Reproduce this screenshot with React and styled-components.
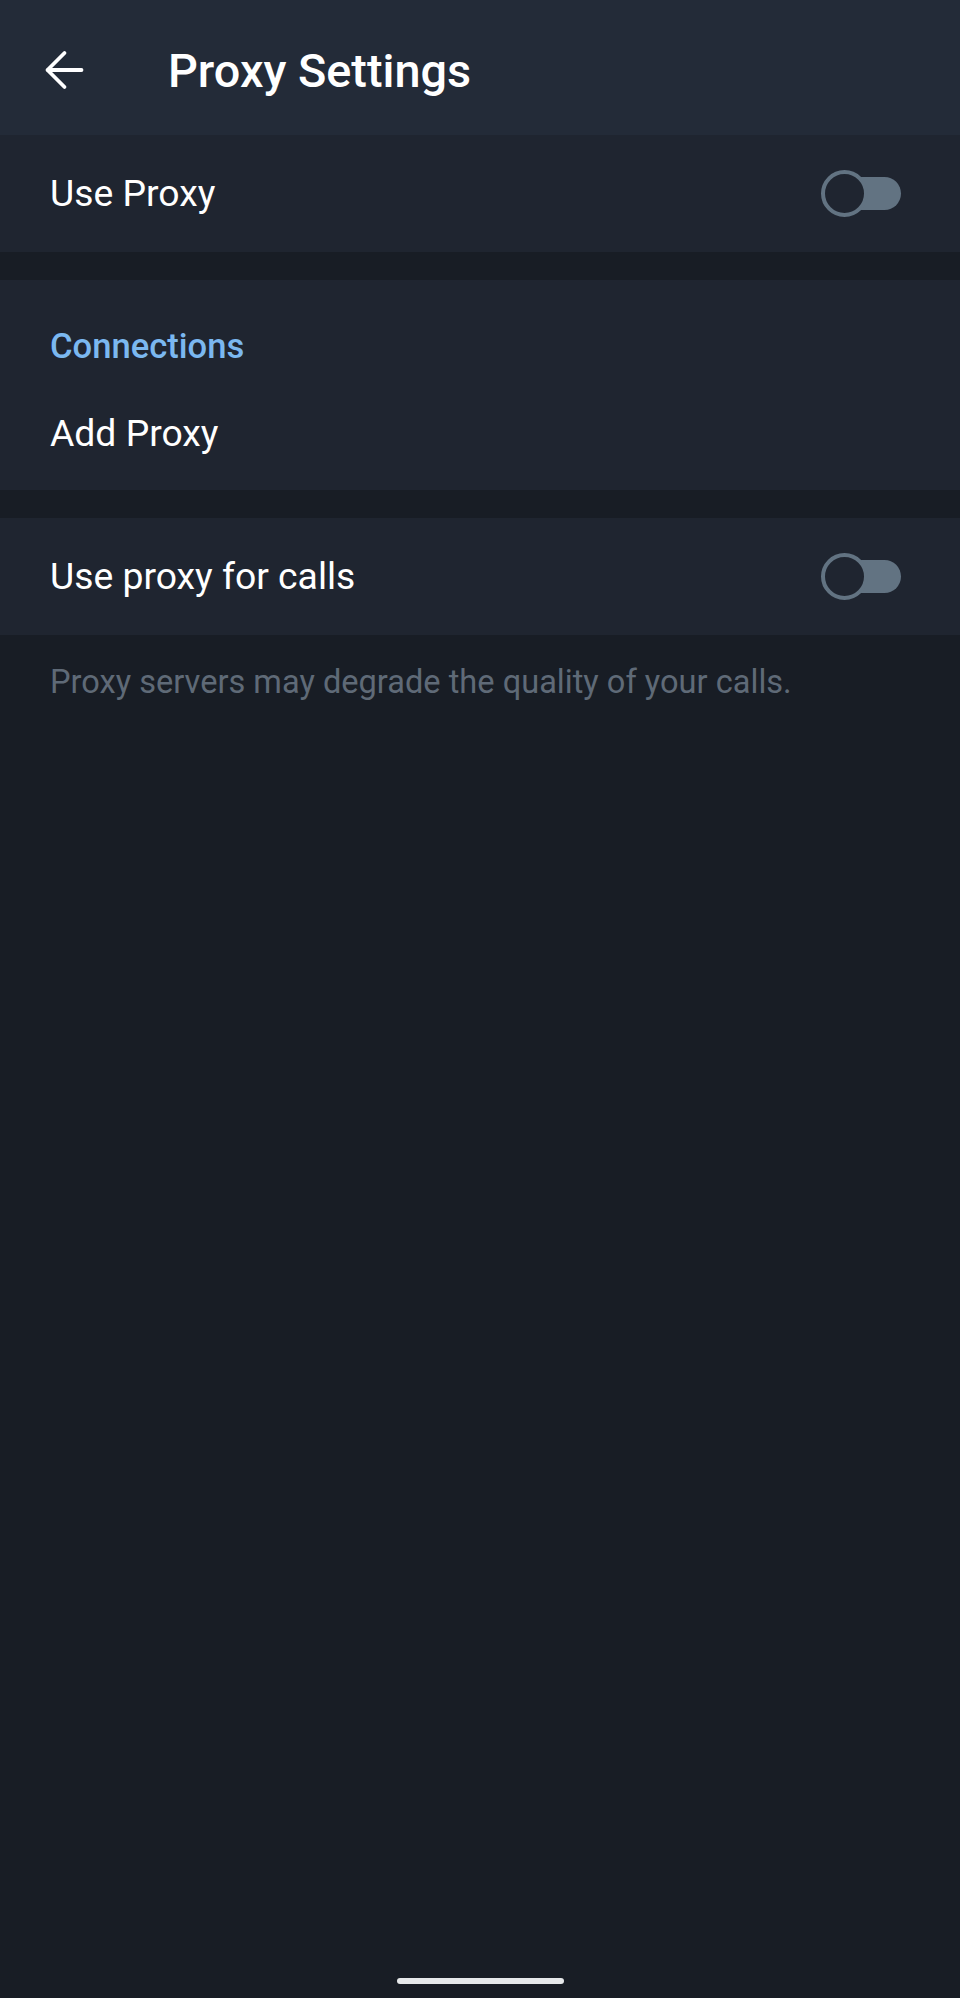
import React from "react";
import styled, { createGlobalStyle } from "styled-components";

const Global = createGlobalStyle`
  html, body { margin: 0; padding: 0; background: #181d25; }
  body { font-family: Roboto, "Noto Sans", "Liberation Sans", sans-serif; -webkit-font-smoothing: antialiased; }
  * { box-sizing: border-box; }
`;

const Screen = styled.div`
  width: 960px;
  min-height: 1998px;
  background: #181d25;
  display: flex;
  flex-direction: column;
`;

const Header = styled.header`
  height: 135px;
  background: #232b38;
  display: flex;
  align-items: center;
  padding: 5px 0 0 44px;
`;

const BackButton = styled.button`
  width: 42px;
  height: 42px;
  padding: 0;
  border: 0;
  background: transparent;
  display: flex;
  align-items: center;
  justify-content: center;
  margin-right: 82px;
  cursor: pointer;
`;

const Title = styled.h1`
  margin: 0;
  padding-top: 2px;
  color: #ffffff;
  font-size: 46.8px;
  font-weight: 500;
  line-height: 1;
  letter-spacing: 0;
`;

const Card = styled.section`
  background: #1f2530;
  display: flex;
  flex-direction: column;
  margin-top: ${(p) => p.$gap || 0}px;
`;

const Row = styled.div`
  height: ${(p) => p.$h || 117}px;
  display: flex;
  align-items: center;
  justify-content: space-between;
  padding: 0 59px 0 50px;
`;

const RowLabel = styled.span`
  color: #ffffff;
  font-size: 37.3px;
  font-weight: 400;
  line-height: 1;
  padding-top: 1px;
`;

const SectionTitle = styled.div`
  padding: 46px 50px 11px;
  color: #7bb8f0;
  font-size: 34.6px;
  font-weight: 500;
  line-height: 40px;
`;

const SwitchWrap = styled.div`
  position: relative;
  width: 80px;
  height: 47px;
`;

const Track = styled.div`
  position: absolute;
  left: 14px;
  right: 0;
  top: 7px;
  height: 33px;
  border-radius: 17px;
  background: #627382;
`;

const Knob = styled.div`
  position: absolute;
  left: 0;
  top: 0;
  width: 47px;
  height: 47px;
  border-radius: 50%;
  background: #1f2530;
  border: 4.5px solid #627382;
`;

const Hint = styled.p`
  margin: 0;
  padding: 27px 50px 0;
  color: #5f6a77;
  font-size: 32.6px;
  line-height: 40px;
  font-weight: 400;
`;

const Spacer = styled.div`
  flex: 1;
`;

const NavBar = styled.div`
  width: 167px;
  height: 6px;
  border-radius: 3px;
  background: #e6e8ea;
  align-self: center;
  margin-bottom: 14px;
`;

const Switch = () => (
  <SwitchWrap>
    <Track />
    <Knob />
  </SwitchWrap>
);

const BackArrow = () => (
  <svg width="42" height="42" viewBox="0 0 42 42" fill="none">
    <path
      d="M37.5 21H3.5M20.5 4L3.5 21L20.5 38"
      stroke="#ffffff"
      strokeWidth="3.8"
      strokeLinecap="round"
      strokeLinejoin="round"
    />
  </svg>
);

export default function App() {
  return (
    <>
      <Global />
      <Screen>
        <Header>
          <BackButton aria-label="Back">
            <BackArrow />
          </BackButton>
          <Title>Proxy Settings</Title>
        </Header>
        <Card>
          <Row>
            <RowLabel>Use Proxy</RowLabel>
            <Switch />
          </Row>
        </Card>
        <Card $gap={28}>
          <SectionTitle>Connections</SectionTitle>
          <Row $h={113}>
            <RowLabel>Add Proxy</RowLabel>
          </Row>
        </Card>
        <Card $gap={28}>
          <Row>
            <RowLabel>Use proxy for calls</RowLabel>
            <Switch />
          </Row>
        </Card>
        <Hint>Proxy servers may degrade the quality of your calls.</Hint>
        <Spacer />
        <NavBar />
      </Screen>
    </>
  );
}
